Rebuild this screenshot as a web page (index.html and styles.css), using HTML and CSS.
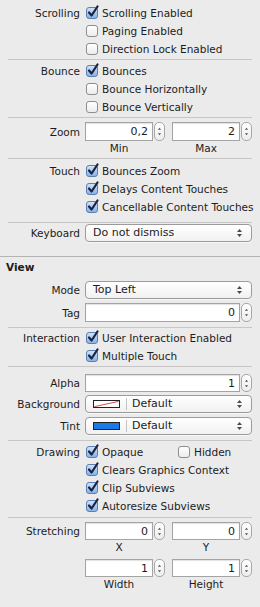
FILE: index.html
```html
<!DOCTYPE html>
<html lang="en">
<head>
    <meta charset="UTF-8">
    <meta name="viewport" content="width=device-width, initial-scale=1.0">
    <title>Attributes Inspector</title>
    <link rel="stylesheet" href="styles.css">
</head>
<body>
    <!-- Scroll View section -->
    <div class="section scroll">
        <div class="group g-scrolling">
            <div class="row">
                <span class="label">Scrolling</span>
                <span class="opt"><span class="cb on"><svg viewBox="0 0 14 14"><path d="M3 7.5 L5.6 10.5 L11.5 1.5"/></svg></span>Scrolling Enabled</span>
            </div>
            <div class="row">
                <span class="label"></span>
                <span class="opt"><span class="cb"></span>Paging Enabled</span>
            </div>
            <div class="row">
                <span class="label"></span>
                <span class="opt"><span class="cb"></span>Direction Lock Enabled</span>
            </div>
        </div>

        <div class="group g-bounce">
            <div class="row">
                <span class="label">Bounce</span>
                <span class="opt"><span class="cb on"><svg viewBox="0 0 14 14"><path d="M3 7.5 L5.6 10.5 L11.5 1.5"/></svg></span>Bounces</span>
            </div>
            <div class="row">
                <span class="label"></span>
                <span class="opt"><span class="cb"></span>Bounce Horizontally</span>
            </div>
            <div class="row">
                <span class="label"></span>
                <span class="opt"><span class="cb"></span>Bounce Vertically</span>
            </div>
        </div>

        <div class="group g-zoom">
            <div class="row field-row">
                <span class="label">Zoom</span>
                <div class="pair">
                    <div class="num"><span class="box">0,2</span><span class="stepper"><svg viewBox="0 0 11 18"><path d="M3.5 7 L5.5 4.5 L7.5 7 Z M3.5 11 L5.5 13.5 L7.5 11 Z"/></svg></span></div>
                    <div class="num"><span class="box">2</span><span class="stepper"><svg viewBox="0 0 11 18"><path d="M3.5 7 L5.5 4.5 L7.5 7 Z M3.5 11 L5.5 13.5 L7.5 11 Z"/></svg></span></div>
                </div>
            </div>
            <div class="row caption-row">
                <span class="label"></span>
                <div class="pair captions"><span>Min</span><span>Max</span></div>
            </div>
        </div>

        <div class="group g-touch">
            <div class="row">
                <span class="label">Touch</span>
                <span class="opt"><span class="cb on"><svg viewBox="0 0 14 14"><path d="M3 7.5 L5.6 10.5 L11.5 1.5"/></svg></span>Bounces Zoom</span>
            </div>
            <div class="row">
                <span class="label"></span>
                <span class="opt"><span class="cb on"><svg viewBox="0 0 14 14"><path d="M3 7.5 L5.6 10.5 L11.5 1.5"/></svg></span>Delays Content Touches</span>
            </div>
            <div class="row">
                <span class="label"></span>
                <span class="opt"><span class="cb on"><svg viewBox="0 0 14 14"><path d="M3 7.5 L5.6 10.5 L11.5 1.5"/></svg></span>Cancellable Content Touches</span>
            </div>
        </div>

        <div class="group g-keyboard last">
            <div class="row field-row">
                <span class="label">Keyboard</span>
                <div class="popup"><span class="value">Do not dismiss</span><svg class="updown" viewBox="0 0 7 10"><path d="M1 4 L3.5 1 L6 4 Z M1 6 L3.5 9 L6 6 Z"/></svg></div>
            </div>
        </div>
    </div>

    <!-- View section -->
    <div class="section view">
        <h3 class="section-title">View</h3>

        <div class="group g-mode">
            <div class="row field-row">
                <span class="label">Mode</span>
                <div class="popup"><span class="value">Top Left</span><svg class="updown" viewBox="0 0 7 10"><path d="M1 4 L3.5 1 L6 4 Z M1 6 L3.5 9 L6 6 Z"/></svg></div>
            </div>
            <div class="row field-row tag-row">
                <span class="label">Tag</span>
                <div class="num wide"><span class="box">0</span><span class="stepper"><svg viewBox="0 0 11 18"><path d="M3.5 7 L5.5 4.5 L7.5 7 Z M3.5 11 L5.5 13.5 L7.5 11 Z"/></svg></span></div>
            </div>
        </div>

        <div class="group g-interaction">
            <div class="row">
                <span class="label">Interaction</span>
                <span class="opt"><span class="cb on"><svg viewBox="0 0 14 14"><path d="M3 7.5 L5.6 10.5 L11.5 1.5"/></svg></span>User Interaction Enabled</span>
            </div>
            <div class="row">
                <span class="label"></span>
                <span class="opt"><span class="cb on"><svg viewBox="0 0 14 14"><path d="M3 7.5 L5.6 10.5 L11.5 1.5"/></svg></span>Multiple Touch</span>
            </div>
        </div>

        <div class="group g-alpha">
            <div class="row field-row">
                <span class="label">Alpha</span>
                <div class="num wide"><span class="box">1</span><span class="stepper"><svg viewBox="0 0 11 18"><path d="M3.5 7 L5.5 4.5 L7.5 7 Z M3.5 11 L5.5 13.5 L7.5 11 Z"/></svg></span></div>
            </div>
            <div class="row field-row bg-row">
                <span class="label">Background</span>
                <div class="popup color"><span class="swatch clear"><svg viewBox="0 0 27 8" preserveAspectRatio="none"><path d="M0.5 7.5 L26.5 0.5"/></svg></span><span class="vsep"></span><span class="value">Default</span><svg class="updown" viewBox="0 0 7 10"><path d="M1 4 L3.5 1 L6 4 Z M1 6 L3.5 9 L6 6 Z"/></svg></div>
            </div>
            <div class="row field-row tint-row">
                <span class="label">Tint</span>
                <div class="popup color"><span class="swatch blue"></span><span class="vsep"></span><span class="value">Default</span><svg class="updown" viewBox="0 0 7 10"><path d="M1 4 L3.5 1 L6 4 Z M1 6 L3.5 9 L6 6 Z"/></svg></div>
            </div>
        </div>

        <div class="group g-drawing">
            <div class="row">
                <span class="label">Drawing</span>
                <div class="opts">
                    <span class="opt opaque"><span class="cb on"><svg viewBox="0 0 14 14"><path d="M3 7.5 L5.6 10.5 L11.5 1.5"/></svg></span>Opaque</span>
                    <span class="opt"><span class="cb"></span>Hidden</span>
                </div>
            </div>
            <div class="row">
                <span class="label"></span>
                <span class="opt"><span class="cb on"><svg viewBox="0 0 14 14"><path d="M3 7.5 L5.6 10.5 L11.5 1.5"/></svg></span>Clears Graphics Context</span>
            </div>
            <div class="row">
                <span class="label"></span>
                <span class="opt"><span class="cb on"><svg viewBox="0 0 14 14"><path d="M3 7.5 L5.6 10.5 L11.5 1.5"/></svg></span>Clip Subviews</span>
            </div>
            <div class="row">
                <span class="label"></span>
                <span class="opt"><span class="cb on"><svg viewBox="0 0 14 14"><path d="M3 7.5 L5.6 10.5 L11.5 1.5"/></svg></span>Autoresize Subviews</span>
            </div>
        </div>

        <div class="group g-stretch last">
            <div class="row field-row">
                <span class="label">Stretching</span>
                <div class="pair">
                    <div class="num"><span class="box">0</span><span class="stepper"><svg viewBox="0 0 11 18"><path d="M3.5 7 L5.5 4.5 L7.5 7 Z M3.5 11 L5.5 13.5 L7.5 11 Z"/></svg></span></div>
                    <div class="num"><span class="box">0</span><span class="stepper"><svg viewBox="0 0 11 18"><path d="M3.5 7 L5.5 4.5 L7.5 7 Z M3.5 11 L5.5 13.5 L7.5 11 Z"/></svg></span></div>
                </div>
            </div>
            <div class="row caption-row">
                <span class="label"></span>
                <div class="pair captions"><span>X</span><span>Y</span></div>
            </div>
            <div class="row field-row wh-row">
                <span class="label"></span>
                <div class="pair">
                    <div class="num"><span class="box">1</span><span class="stepper"><svg viewBox="0 0 11 18"><path d="M3.5 7 L5.5 4.5 L7.5 7 Z M3.5 11 L5.5 13.5 L7.5 11 Z"/></svg></span></div>
                    <div class="num"><span class="box">1</span><span class="stepper"><svg viewBox="0 0 11 18"><path d="M3.5 7 L5.5 4.5 L7.5 7 Z M3.5 11 L5.5 13.5 L7.5 11 Z"/></svg></span></div>
                </div>
            </div>
            <div class="row caption-row">
                <span class="label"></span>
                <div class="pair captions"><span>Width</span><span>Height</span></div>
            </div>
        </div>
    </div>
</body>
</html>
```

FILE: styles.css
```css
:root {
    --bg: #ebebeb;
    --text: #1c1c1c;
    --rule: #c6c6c6;
    --rule-strong: #b4b4b4;
    --control-border: #9b9b9b;
    --field-border: #a4a4a4;
}

* {
    box-sizing: border-box;
    margin: 0;
    padding: 0;
}

body {
    width: 260px;
    min-height: 607px;
    background: var(--bg);
    color: var(--text);
    font-family: "DejaVu Sans", Verdana, sans-serif;
    font-size: 10.5px;
    line-height: 14px;
}

.section {
    padding: 0 8px;
}

.section.scroll {
    border-bottom: 1px solid var(--rule-strong);
    padding-bottom: 14px;
}

.section-title {
    font-size: 10.5px;
    font-weight: bold;
    height: 18px;
    padding-top: 2px;
    margin-left: -2px;
    line-height: 16px;
}

.group {
    border-bottom: 1px solid var(--rule);
}

.group.last {
    border-bottom: none;
}

/* rows */
.row {
    display: grid;
    grid-template-columns: 72px 167px;
    column-gap: 5px;
    align-items: center;
    height: 18px;
}

.field-row {
    height: 19px;
}

.caption-row {
    height: 14px;
}

.label {
    text-align: right;
    white-space: nowrap;
}

/* checkboxes */
.opt {
    display: flex;
    align-items: center;
    gap: 4px;
    padding-left: 1px;
    white-space: nowrap;
}

.opts {
    display: flex;
}

.opt.opaque {
    width: 92px;
}

.cb {
    position: relative;
    width: 12px;
    height: 12px;
    flex: none;
    border: 1px solid #8e8e8e;
    border-radius: 3px;
    background: linear-gradient(#ffffff, #ececec);
}

.cb.on {
    border-color: #5a7fb0;
    background: linear-gradient(#cfe2f8, #86b3e8);
}

.cb svg {
    position: absolute;
    left: -1px;
    top: -3px;
    width: 14px;
    height: 14px;
    overflow: visible;
}

.cb svg path {
    fill: none;
    stroke: #1b2140;
    stroke-width: 2.2;
    stroke-linecap: round;
    stroke-linejoin: round;
}

/* number fields */
.pair {
    display: grid;
    grid-template-columns: 1fr 1fr;
    column-gap: 7px;
}

.num {
    display: flex;
    gap: 1px;
    height: 19px;
}

.box {
    flex: 1;
    background: #fff;
    border: 1px solid var(--field-border);
    box-shadow: inset 0 1px 1px rgba(0, 0, 0, 0.12);
    text-align: right;
    padding-right: 4px;
    line-height: 17px;
    font-size: 11px;
}

.stepper {
    width: 11px;
    flex: none;
    border: 1px solid #a8a8a8;
    border-radius: 5px;
    background: linear-gradient(#ffffff, #ededed);
}

.stepper svg {
    display: block;
    width: 9px;
    height: 17px;
}

.stepper svg path {
    fill: #555;
}

.captions span {
    text-align: center;
    padding-right: 12px;
}

/* popups */
.popup {
    display: flex;
    align-items: center;
    height: 18px;
    border: 1px solid var(--control-border);
    border-radius: 4px;
    background: linear-gradient(#ffffff, #f1f1f1);
    box-shadow: 0 1px 0 rgba(255, 255, 255, 0.6);
    padding: 0 8px 0 7px;
    font-size: 11px;
}

.popup .value {
    flex: 1;
}

.updown {
    width: 7px;
    height: 10px;
}

.updown path {
    fill: #4a4a4a;
}

.popup.color {
    padding-left: 7px;
}

.swatch {
    width: 27px;
    height: 8px;
    flex: none;
    border: 1px solid #222;
}

.swatch.clear {
    background: #fff;
}

.swatch.clear svg {
    display: block;
    width: 25px;
    height: 6px;
}

.swatch.clear path {
    stroke: #d42a2a;
    stroke-width: 1;
}

.swatch.blue {
    background: #1a7ae6;
}

.vsep {
    width: 1px;
    height: 12px;
    margin: 0 5px 0 6px;
    background: #c4c4c4;
}

/* vertical spacing per group */
.g-scrolling {
    padding: 4px 0 1px;
}

.g-bounce {
    padding: 2px 0 1px;
}

.g-zoom {
    padding: 4px 0 3px;
}

.g-touch {
    padding: 3px 0 6px;
}

.g-keyboard {
    padding-top: 1px;
}

.g-keyboard .field-row {
    height: 18px;
}

.g-mode {
    padding: 5px 0 5px;
}

.tag-row {
    margin-top: 4px;
}

.g-interaction {
    padding: 1px 0 1px;
}

.g-alpha {
    padding: 6px 0 5px;
}

.g-alpha .num {
    height: 18px;
}

.bg-row {
    margin-top: 2px;
}

.tint-row {
    margin-top: 3px;
}

.g-drawing {
    padding: 2px 0 2px;
}

.g-stretch {
    padding-top: 3px;
}

.g-stretch .num {
    height: 18px;
}

.wh-row {
    margin-top: 4px;
}
```
